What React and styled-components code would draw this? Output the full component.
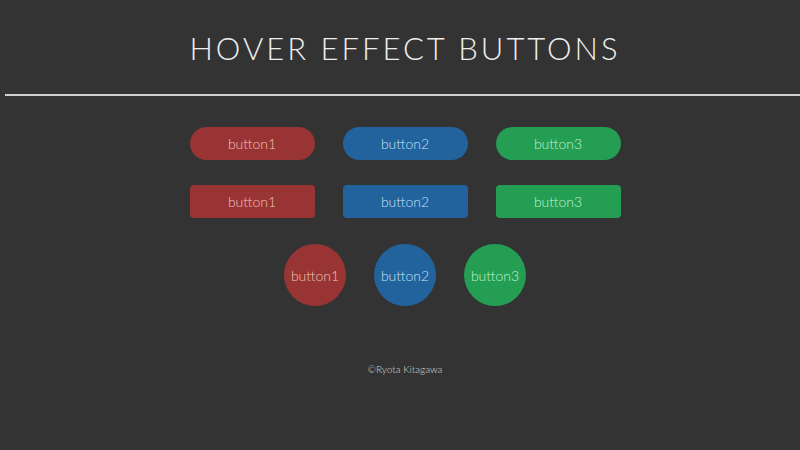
import React from "react";
import styled, { createGlobalStyle } from "styled-components";

const GlobalStyle = createGlobalStyle`
  html, body {
    margin: 0;
    padding: 0;
    background: #333333;
  }
  body {
    font-family: Lato, "Open Sans", sans-serif;
  }
`;

const palette = {
  red: { bg: "#983434", fg: "#f3c0bb" },
  blue: { bg: "#23639d", fg: "#c2e0f6" },
  green: { bg: "#239e52", fg: "#c2f0d0" },
};

const Page = styled.div`
  width: 800px;
  height: 450px;
  display: flex;
  flex-direction: column;
  align-items: center;
  overflow: hidden;
`;

const Title = styled.h1`
  margin: 32px 0 0 10px;
  font-family: Lato, sans-serif;
  font-weight: 300;
  font-size: 31px;
  line-height: 33px;
  letter-spacing: 3px;
  color: #eeeeee;
`;

const Rule = styled.hr`
  align-self: stretch;
  margin: 29px 0 0 5px;
  border: none;
  border-top: 2px solid #cfcfcf;
`;

const Grid = styled.div`
  display: grid;
  grid-template-columns: repeat(3, 125px);
  column-gap: 28px;
  row-gap: 25px;
  margin: 31px 0 0 10px;
`;

const Button = styled.button`
  height: 33px;
  border: none;
  padding: 0;
  border-radius: ${({ $round }) => ($round ? "17px" : "4px")};
  background: ${({ $color }) => palette[$color].bg};
  color: ${({ $color }) => palette[$color].fg};
  font-family: Lato, sans-serif;
  font-weight: 300;
  font-size: 14px;
  cursor: pointer;
`;

const Circles = styled.div`
  display: flex;
  gap: 28px;
  margin: 26px 0 0 10px;
`;

const Circle = styled.button`
  width: 62px;
  height: 62px;
  border: none;
  padding: 0;
  border-radius: 50%;
  background: ${({ $color }) => palette[$color].bg};
  color: ${({ $color }) => palette[$color].fg};
  font-family: Lato, sans-serif;
  font-weight: 300;
  font-size: 14px;
  cursor: pointer;
`;

const Footer = styled.p`
  margin: 57px 0 0 10px;
  font-family: Lato, sans-serif;
  font-weight: 300;
  font-size: 10px;
  color: #d6d6d6;
`;

const colors = ["red", "blue", "green"];

export default function App() {
  return (
    <>
      <GlobalStyle />
      <Page>
        <Title>HOVER EFFECT BUTTONS</Title>
        <Rule />
        <Grid>
          {colors.map((c, i) => (
            <Button key={"r" + c} $round $color={c}>
              button{i + 1}
            </Button>
          ))}
          {colors.map((c, i) => (
            <Button key={"s" + c} $color={c}>
              button{i + 1}
            </Button>
          ))}
        </Grid>
        <Circles>
          {colors.map((c, i) => (
            <Circle key={c} $color={c}>
              button{i + 1}
            </Circle>
          ))}
        </Circles>
        <Footer>©Ryota Kitagawa</Footer>
      </Page>
    </>
  );
}
